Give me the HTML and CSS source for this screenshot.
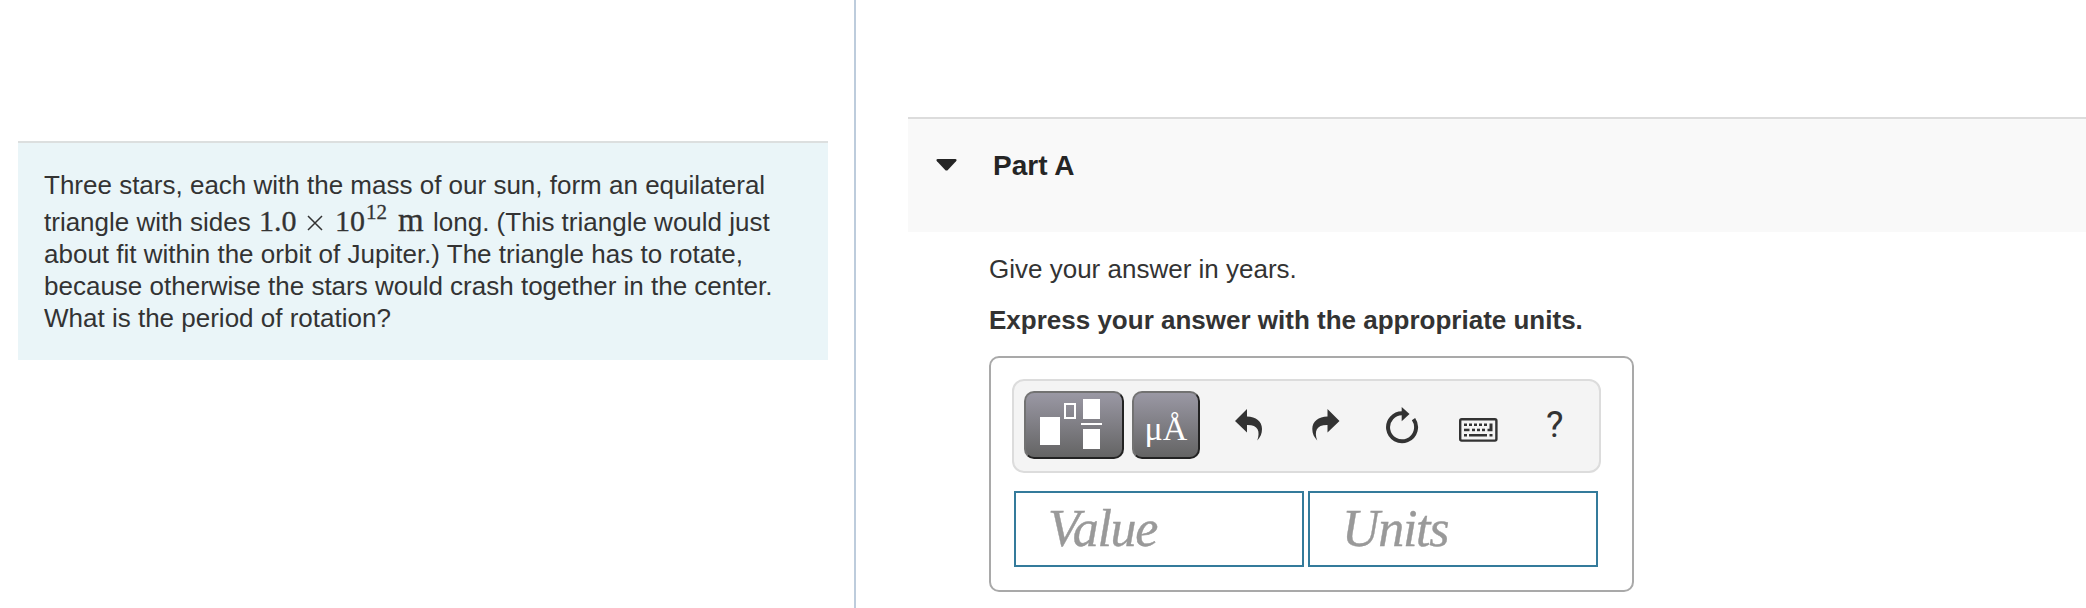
FILE: index.html
```html
<!DOCTYPE html>
<html lang="en">
<head>
    <meta charset="UTF-8">
    <meta name="viewport" content="width=device-width, initial-scale=1.0">
    <title>Part A</title>
    <link rel="stylesheet" href="styles.css">
</head>
<body>
    <div class="page">
        <section class="left-pane">
            <div class="problem">
                <div class="line line-1">Three stars, each with the mass of our sun, form an equilateral</div>
                <div class="line line-2"><span class="before">triangle with sides</span><span class="math"><span class="num">1.0</span><svg class="times" width="16" height="16" viewBox="0 0 16 16"><path d="M1 1L15 15M15 1L1 15" stroke="#333" stroke-width="1.5" fill="none"/></svg><span class="ten">10</span><span class="exp">12</span><span class="unit">m</span></span><span class="after">long. (This triangle would just</span></div>
                <div class="line line-3">about fit within the orbit of Jupiter.) The triangle has to rotate,</div>
                <div class="line line-4">because otherwise the stars would crash together in the center.</div>
                <div class="line line-5">What is the period of rotation?</div>
            </div>
        </section>

        <section class="right-pane">
            <header class="part-header">
                <svg class="caret" width="21" height="12" viewBox="0 0 21 12"><path d="M1.5 0H19.5Q21.5 .5 20 2.2L11.6 11.2Q10.5 12 9.4 11.2L1 2.2Q-.5 .5 1.5 0Z" fill="#252525"/></svg>
                <h2>Part A</h2>
            </header>
            <div class="part-body">
                <p class="give">Give your answer in years.</p>
                <p class="express">Express your answer with the appropriate units.</p>

                <div class="answer-box">
                    <div class="toolbar">
                        <button class="tool templates">
                            <svg width="96" height="64" viewBox="0 0 96 64">
                                <g fill="#fff">
                                    <rect x="14" y="24" width="20" height="28"/>
                                    <rect x="57" y="6" width="17" height="20"/>
                                    <rect x="55" y="30" width="21" height="2"/>
                                    <rect x="57" y="36" width="17" height="20"/>
                                </g>
                                <rect x="39" y="11" width="10" height="14" fill="none" stroke="#fff" stroke-width="2"/>
                            </svg>
                        </button>
                        <button class="tool symbols"><span>μÅ</span></button>
                        <span class="icon undo">
                            <svg width="28" height="32" viewBox="0 0 28 32"><path d="M0 12L12 0V7.5C21 8 27 12 27 20C27 24.5 25.5 28 22.3 31.5C25.5 22 23 15.8 12 16V23.5Z" fill="#333"/></svg>
                        </span>
                        <span class="icon redo">
                            <svg width="28" height="32" viewBox="0 0 28 32"><path d="M27.5 12L15.5 0V7.5C6.5 8 .3 12 .3 20C.3 24.5 2 28 5.2 31.5C2 22 4.5 15.8 15.5 16V23.5Z" fill="#333"/></svg>
                        </span>
                        <span class="icon reset">
                            <svg width="33" height="37" viewBox="0 0 33 37"><path d="M17 6.3A14 14 0 1 0 27.5 12.2" fill="none" stroke="#333" stroke-width="4"/><path d="M15.7 0L23.5 7L15.7 14.2Z" fill="#333"/></svg>
                        </span>
                        <span class="icon keyboard">
                            <svg width="39" height="24" viewBox="0 0 39 24">
                                <rect x="1.2" y="1.2" width="36.2" height="21.4" rx="1.5" fill="none" stroke="#333" stroke-width="2.4"/>
                                <g fill="#333">
                                    <rect x="5" y="5.5" width="3" height="2.5"/><rect x="10" y="5.5" width="3" height="2.5"/><rect x="15" y="5.5" width="3" height="2.5"/><rect x="20" y="5.5" width="3" height="2.5"/><rect x="25" y="5.5" width="3" height="2.5"/>
                                    <path d="M30.5 5.5H33.5V13.2H28.5V10.7H30.5Z"/>
                                    <rect x="5" y="10.7" width="5.5" height="2.5"/><rect x="13" y="10.7" width="3" height="2.5"/><rect x="18" y="10.7" width="3" height="2.5"/><rect x="23" y="10.7" width="3" height="2.5"/>
                                    <rect x="5" y="16" width="3" height="2.5"/><rect x="10" y="16" width="18" height="2.5"/><rect x="30.5" y="16" width="3" height="2.5"/>
                                </g>
                            </svg>
                        </span>
                        <span class="icon help">?</span>
                    </div>
                    <div class="fields">
                        <div class="field value">Value</div>
                        <div class="field units">Units</div>
                    </div>
                </div>
            </div>
        </section>
    </div>
</body>
</html>
```
FILE: styles.css
```css
* {
    box-sizing: border-box;
}
body {
    margin: 0;
    background: #fff;
    color: #333;
    font-family: "Liberation Sans", Arial, sans-serif;
    font-size: 26px;
}
.page {
    display: flex;
    height: 608px;
    overflow: hidden;
}
.left-pane {
    width: 856px;
    flex: none;
    padding: 141px 26px 0 18px;
    border-right: 2px solid #bdccdc;
}
.problem {
    height: 219px;
    padding: 26px 0 0 26px;
    border-top: 2px solid #dcdfdf;
    background: #eaf5f8;
}
.line {
    height: 32px;
    line-height: 32px;
    white-space: nowrap;
}
.line-2 {
    display: flex;
    height: 37px;
    line-height: 42px;
}
.before {
    width: 215px;
}
.math {
    display: flex;
    width: 174px;
    font-family: "Liberation Serif", "Times New Roman", serif;
    font-size: 30px;
    line-height: 40px;
    -webkit-text-stroke: 0.3px #333;
}
.num {
    width: 48px;
}
.times {
    margin-top: 14px;
}
.ten {
    width: 31px;
    margin-left: 12px;
}
.exp {
    width: 32px;
    font-size: 21px;
    line-height: 22px;
}
.unit {
    font-size: 33px;
    line-height: 39px;
}
.right-pane {
    flex: 1;
    padding: 117px 0 0 52px;
}
.part-header {
    display: flex;
    height: 115px;
    padding-left: 28px;
    border-top: 2px solid #dcdcdc;
    background: #f9f9f9;
}
.caret {
    margin-top: 40px;
}
h2 {
    margin: 29px 0 0 36px;
    color: #252525;
    font-size: 28px;
    line-height: 36px;
}
.part-body {
    padding-left: 81px;
}
p {
    margin: 0;
    line-height: 32px;
}
.give {
    padding-top: 21px;
}
.express {
    margin-top: 19px;
    font-weight: bold;
}
.answer-box {
    width: 645px;
    height: 236px;
    margin-top: 20px;
    padding: 21px 0 0 21px;
    border: 2px solid #a9a9a9;
    border-radius: 10px;
}
.toolbar {
    display: flex;
    width: 589px;
    height: 94px;
    padding: 10px;
    border: 2px solid #dcdcdc;
    border-radius: 12px;
    background: #f4f4f4;
}
.tool {
    flex: none;
    width: 100px;
    height: 68px;
    padding: 0;
    border: 2px solid;
    border-color: #727272 #222 #222 #727272;
    border-radius: 10px;
    background: linear-gradient(#9a98a4, #646464);
}
.tool svg {
    display: block;
}
.symbols {
    width: 68px;
    margin-left: 8px;
    color: #fff;
    font-family: "Liberation Serif", "Times New Roman", serif;
    font-size: 34px;
}
.symbols span {
    display: block;
    padding-top: 7px;
}
.icon {
    flex: none;
    line-height: 0;
}
.undo {
    margin: 18px 0 0 35px;
}
.redo {
    margin: 18px 0 0 49px;
}
.reset {
    margin: 16px 0 0 46px;
}
.keyboard {
    margin: 27px 0 0 40px;
}
.help {
    margin: 14px 0 0 48px;
    font-family: Roboto, sans-serif;
    font-size: 37px;
    line-height: 40px;
}
.fields {
    display: flex;
    gap: 4px;
    margin: 18px 0 0 2px;
}
.field {
    width: 290px;
    height: 76px;
    padding-left: 32px;
    border: 2px solid #347b9b;
    color: #999;
    font-family: "Liberation Serif", "Times New Roman", serif;
    font-size: 52px;
    font-style: italic;
    line-height: 72px;
    letter-spacing: -1.3px;
    -webkit-text-stroke: 0.4px #999;
}
```
